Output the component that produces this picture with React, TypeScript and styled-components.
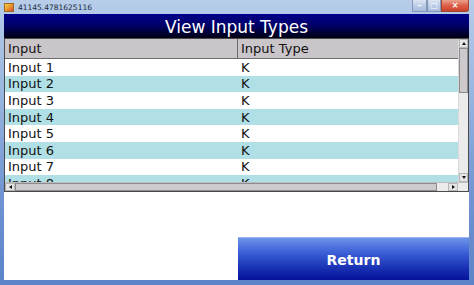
import React from "react";
import styled, { createGlobalStyle } from "styled-components";

const GlobalStyle = createGlobalStyle`
  html, body {
    margin: 0;
    padding: 0;
    background: #ffffff;
  }
`;

const Window = styled.div`
  width: 474px;
  height: 285px;
  box-sizing: border-box;
  display: flex;
  flex-direction: column;
  padding: 0 5px 5px 4px;
  background: linear-gradient(180deg, #b7cde9 0%, #9bb8e0 30%, #6f93d2 70%, #5c83c9 100%);
  font-family: "DejaVu Sans", Verdana, sans-serif;
  overflow: hidden;
`;

const TitleBar = styled.div`
  height: 14px;
  display: flex;
  align-items: center;
  gap: 4px;
  position: relative;
`;

const AppIcon = styled.div`
  width: 8px;
  height: 7px;
  background: linear-gradient(135deg, #f6d34a 0%, #e9892a 60%, #d14b3b 100%);
  border: 1px solid #a06820;
`;

const Caption = styled.span`
  font-size: 7.5px;
  color: #1a2a40;
`;

const Controls = styled.div`
  position: absolute;
  top: 0;
  right: 0;
  display: flex;
  height: 12px;
`;

const CtrlButton = styled.div<{ $close?: boolean; $w: number }>`
  width: ${({ $w }) => $w}px;
  height: 12px;
  box-sizing: border-box;
  border: 1px solid ${({ $close }) => ($close ? "#a0473a" : "#8497b8")};
  border-top: none;
  border-radius: 0 0 ${({ $close }) => ($close ? "3px" : "0")} 0;
  background: ${({ $close }) =>
    $close
      ? "linear-gradient(180deg, #eba28f 0%, #dc5f47 50%, #cb4128 100%)"
      : "linear-gradient(180deg, #dce6f4 0%, #bccde6 50%, #a7bcdc 100%)"};
  display: flex;
  align-items: center;
  justify-content: center;
  color: #ffffff;
  font-size: 8px;
  font-weight: bold;
  line-height: 1;
`;

const Client = styled.div`
  flex: 1;
  display: flex;
  flex-direction: column;
  background: #ffffff;
  min-height: 0;
`;

const Header = styled.div`
  height: 24px;
  background: linear-gradient(180deg, #00008c 0%, #00006a 45%, #000012 100%);
  color: #ffffff;
  font-size: 17px;
  display: flex;
  align-items: center;
  justify-content: center;
  padding-top: 1px;
  box-sizing: border-box;
`;

const Table = styled.div`
  height: 154px;
  box-sizing: border-box;
  border: 1px solid #4a4a4a;
  display: grid;
  grid-template-columns: 1fr 10px;
  grid-template-rows: 1fr 9px;
`;

const Grid = styled.div`
  overflow: hidden;
  display: flex;
  flex-direction: column;
`;

const Row = styled.div<{ $alt?: boolean; $head?: boolean }>`
  display: grid;
  grid-template-columns: 233px 1fr;
  flex: none;
  height: ${({ $head }) => ($head ? "19px" : "16.6px")};
  background: ${({ $head, $alt }) => ($head ? "#c9c5c9" : $alt ? "#b0e0e6" : "#ffffff")};
  border-bottom: ${({ $head }) => ($head ? "1px solid #6d6a6d" : "none")};
  font-size: 13px;
  color: #111111;
`;

const Cell = styled.div<{ $head?: boolean }>`
  padding-left: 3px;
  display: flex;
  align-items: center;
  border-right: ${({ $head }) => ($head ? "1px solid #6d6a6d" : "none")};
  white-space: nowrap;
`;

const VScroll = styled.div`
  display: flex;
  flex-direction: column;
  background: #ebebeb;
  border-left: 1px solid #d8d8d8;
`;

const HScroll = styled.div`
  display: flex;
  background: #ebebeb;
  border-top: 1px solid #bdbdbd;
`;

const Arrow = styled.div<{ $dir: "up" | "down" | "left" | "right" }>`
  flex: none;
  width: ${({ $dir }) => ($dir === "up" || $dir === "down" ? "100%" : "10px")};
  height: ${({ $dir }) => ($dir === "up" || $dir === "down" ? "9px" : "100%")};
  display: flex;
  align-items: center;
  justify-content: center;
  background: #e6e6e6;
  border: 1px solid #b5b5b5;
  box-sizing: border-box;

  &::after {
    content: "";
    width: 0;
    height: 0;
    border: 2.5px solid transparent;
    ${({ $dir }) =>
      $dir === "up"
        ? "border-bottom: 3px solid #111; border-top-width: 0;"
        : $dir === "down"
        ? "border-top: 3px solid #111; border-bottom-width: 0;"
        : $dir === "left"
        ? "border-right: 3px solid #111; border-left-width: 0;"
        : "border-left: 3px solid #111; border-right-width: 0;"}
  }
`;

const Thumb = styled.div<{ $size: number; $vertical?: boolean }>`
  flex: none;
  ${({ $vertical, $size }) => ($vertical ? `height: ${$size}px;` : `width: ${$size}px;`)}
  background: #cdc9cd;
  border: 1px solid #8e8b8e;
  box-sizing: border-box;
`;

const Track = styled.div`
  flex: 1;
`;

const Corner = styled.div`
  background: #ebebeb;
  border-top: 1px solid #bdbdbd;
`;

const Footer = styled.div`
  flex: 1;
  display: flex;
  flex-direction: column;
  justify-content: flex-end;
  align-items: flex-end;
`;

const ReturnButton = styled.div`
  width: 231px;
  height: 43px;
  box-sizing: border-box;
  background: linear-gradient(180deg, #6e93e8 0%, #3a5fd6 35%, #1a33b5 70%, #05129a 100%);
  border-top: 1px solid #9ab4f0;
  color: #ffffff;
  font-weight: bold;
  font-size: 14px;
  display: flex;
  align-items: center;
  justify-content: center;
  padding-top: 2px;
`;

const rows = Array.from({ length: 8 }, (_, i) => ({ name: `Input ${i + 1}`, type: "K" }));

export default function App() {
  return (
    <>
      <GlobalStyle />
      <Window>
        <TitleBar>
          <AppIcon />
          <Caption>41145.4781625116</Caption>
          <Controls>
            <CtrlButton $w={15}>–</CtrlButton>
            <CtrlButton $w={14}>□</CtrlButton>
            <CtrlButton $w={28} $close>
              ×
            </CtrlButton>
          </Controls>
        </TitleBar>
        <Client>
          <Header>View Input Types</Header>
          <Table>
            <Grid>
              <Row $head>
                <Cell $head>Input</Cell>
                <Cell>Input Type</Cell>
              </Row>
              {rows.map((r, i) => (
                <Row key={r.name} $alt={i % 2 === 1}>
                  <Cell>{r.name}</Cell>
                  <Cell>{r.type}</Cell>
                </Row>
              ))}
            </Grid>
            <VScroll>
              <Arrow $dir="up" />
              <Thumb $vertical $size={45} />
              <Track />
              <Arrow $dir="down" />
            </VScroll>
            <HScroll>
              <Arrow $dir="left" />
              <Thumb $size={422} />
              <Track />
              <Arrow $dir="right" />
            </HScroll>
            <Corner />
          </Table>
          <Footer>
            <ReturnButton>Return</ReturnButton>
          </Footer>
        </Client>
      </Window>
    </>
  );
}
